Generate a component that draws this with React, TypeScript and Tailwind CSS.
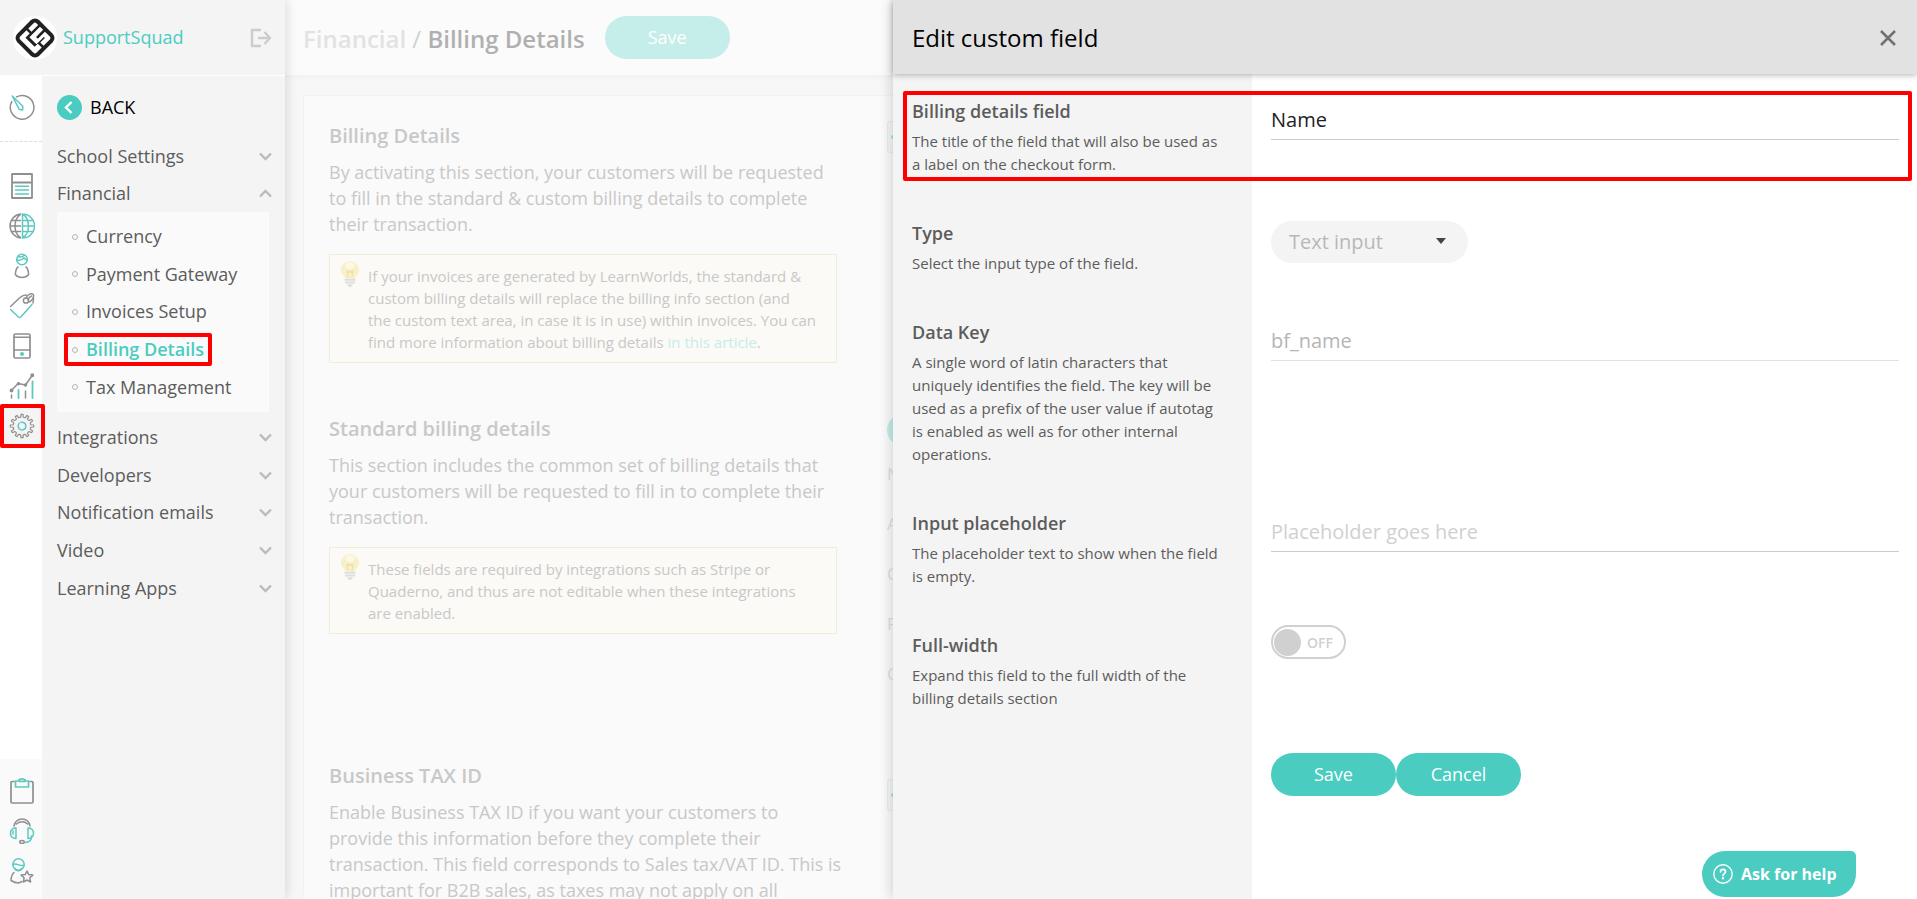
import React from "react";

const GREY = "#8f8f8f";
const TEAL = "#5cc9c0";

function Icon({ children }: { children: React.ReactNode }) {
  return (
    <svg
      className="h-[26px] w-[26px]"
      viewBox="0 0 26 26"
      fill="none"
      stroke={GREY}
      strokeWidth="1.5"
      strokeLinecap="round"
      strokeLinejoin="round"
      aria-hidden="true"
    >
      {children}
    </svg>
  );
}

const GaugeIcon = () => (
  <Icon>
    <path d="M7.6 2.9A11.8 11.8 0 1 1 2.8 7.6" />
    <path d="M3.3 2 13.8 12.2 13.6 16 10.2 15.4Z" stroke={TEAL} />
  </Icon>
);

const ListIcon = () => (
  <Icon>
    <path d="M3 1h20v24H3zM3 9.5h20" strokeWidth="1.8" />
    <path d="M6.5 13.2h13M6.5 17h13M6.5 21h13" stroke={TEAL} strokeWidth="1.6" />
  </Icon>
);

const GlobeIcon = () => (
  <Icon>
    <path d="M11.5 1.1a12 12 0 0 0 0 23.8M11.5 1.3C7.5 4 6 8.5 6 13s1.5 9 5.5 11.7M1 13h10.500M2.8 7.5h8.700M2.8 18.5h8.700" />
    <path d="M13.5 1a12 12 0 0 1 0 24zM13.5 1c4 2.5 6 7.5 6 12s-2 9.5-6 12M13.5 13h11.500M13.5 7.5h10M13.5 18.5h10" stroke={TEAL} />
  </Icon>
);

const PersonIcon = () => (
  <Icon>
    <circle cx="13" cy="6.5" r="5.3" stroke={TEAL} />
    <path d="M8 7c3 .8 5.5-.2 7-2.200.6 1.200 1.600 1.800 3 2M9.500 3.500c1.500.8 4 .5 5.500-1" stroke={TEAL} />
    <path d="M9 14c-1.600 1-2.400 4.500-2.700 7.500 3.500 4 9.900 4 13.400 0-.3-3-1.100-6.500-2.700-7.500" />
  </Icon>
);

const TagIcon = () => (
  <Icon>
    <path d="M1.500 13.500 11 4.500c1.500-1.300 4-2.500 6.500-2.500M24 10l.5-4.500" />
    <circle cx="17" cy="7.5" r="2.6" />
    <path d="M17 5c1.500-3.500 5-5 7-3.800 1.500 1.500 0 6-4 8M19 7c.5-2 2-3.500 3.500-4" />
    <path d="M1.500 16.500 9.500 24c.8.6 1.500.6 2.200 0L23 11.500" stroke={TEAL} />
  </Icon>
);

const PhoneIcon = () => (
  <Icon>
    <rect x="5" y="1" width="16" height="24" rx="1.5" strokeWidth="1.7" />
    <path d="M5 4.200h16M5 17h16" />
    <circle cx="13" cy="21" r="2" fill={TEAL} stroke="none" />
  </Icon>
);

const ChartIcon = () => (
  <Icon>
    <path d="M2.500 17.500 9 10.500l7.500 1.500L23.500 2" />
    <circle cx="2.5" cy="17.5" r="1.2" fill={GREY} />
    <circle cx="9.5" cy="10.8" r="1" fill={GREY} />
    <circle cx="16.5" cy="12" r="1" fill={GREY} />
    <circle cx="23.3" cy="2.2" r="1.2" fill={GREY} />
    <path d="M2.500 22v3M16.500 18v7" />
    <path d="M9.500 17v8M23.500 8.500V25" stroke={TEAL} strokeWidth="1.8" />
  </Icon>
);

const TEETH = Array.from({ length: 12 }, (_, i) => {
  const p = (deg: number, r: number) => {
    const a = ((i * 30 + deg) * Math.PI) / 180;
    return `${(13 + r * Math.sin(a)).toFixed(2)} ${(13 - r * Math.cos(a)).toFixed(2)}`;
  };
  return `${i ? "L" : "M"}${p(-8, 9)}L${p(-5, 11.7)}L${p(5, 11.7)}L${p(8, 9)}A2.6 2.6 0 0 0 ${p(22, 9)}`;
}).join("");

const GearIcon = () => (
  <Icon>
    <path d={`${TEETH}Z`} strokeWidth="1.2" />
    <path d="M12 9.300a3.900 3.900 0 1 0 2 0" stroke={TEAL} transform="rotate(-30 13 13)" />
  </Icon>
);

const ClipboardIcon = () => (
  <Icon>
    <path d="M5 3.500H3.200c-.7 0-1.200.5-1.200 1.200v19.100c0 .7.500 1.200 1.200 1.200h19.600c.7 0 1.200-.5 1.200-1.200V4.700c0-.7-.5-1.200-1.200-1.200H21" strokeWidth="1.7" />
    <path d="M6.500 3h3C10 1.300 11 .9 13 .9s3 .4 3.500 2.100h3v6h-13zM10 3.300h6" stroke={TEAL} strokeWidth="1.7" />
  </Icon>
);

const HeadsetIcon = () => (
  <Icon>
    <path d="M5 8c1-4.500 4-7 8-7s7 2.500 8 7M7.500 6c3-3 8-3 11 0" />
    <path d="M7 10v10.500c-3 .3-5.500-1.800-5.500-5.200S4 9.700 7 10zM4 13v3M19 10v10.500c3 .3 5.500-1.800 5.500-5.200S22 9.700 19 10zM22.300 18c.5 4-1.300 6-5.800 6.500" stroke={TEAL} />
    <ellipse cx="13" cy="24" rx="2.3" ry="1.5" />
  </Icon>
);

const PersonStarIcon = () => (
  <Icon>
    <circle cx="9.5" cy="6.5" r="5.7" stroke={TEAL} />
    <path d="M4 6.500c3-1.800 6 1.500 10.500 1M6 10.500c1 3 5.500 3 6.500 0" stroke={TEAL} />
    <path d="M5 14.500c-2 1.500-2.800 4.500-3 8C4.500 24 7 25 9.500 25l3.500-1.500" />
    <path d="m18 13 1.700 3.600 4.100.5-3 2.700.8 4.200-3.600-2-3.700 2 .8-4.200-3-2.700 4.100-.5z" />
  </Icon>
);

function Logo() {
  return (
    <svg className="h-[44px] w-[44px]" viewBox="0 0 44 44" aria-hidden="true">
      <circle cx="22" cy="22" r="22" fill="#fff" />
      <g transform="rotate(45 22 22)">
        <rect x="6.5" y="6.5" width="31" height="31" rx="6" fill="#212121" />
        <path d="M10.500 22.500h4.500v6h13V24h5.500v7.500a2 2 0 0 1-2 2h-19a2 2 0 0 1-2-2z" fill="#fff" />
        <path d="M10.500 20V12.500a2 2 0 0 1 2-2H15V20zM17.500 10.500H22v10h2.500v-10H31.500a2 2 0 0 1 2 2v9h-4.500V15h-1.500v10.500h-10z" fill="#fff" />
      </g>
    </svg>
  );
}

function Chevron({ up = false }: { up?: boolean }) {
  return (
    <svg className="h-[9px] w-[13px]" viewBox="0 0 13 9" fill="none" stroke="#bbbbbb" strokeWidth="2.4" aria-hidden="true">
      <path d={up ? "M1 7.500 6.500 2 12 7.500" : "M1 1.500 6.500 7 12 1.500"} />
    </svg>
  );
}

function MenuRow({ label, open = false }: { label: string; open?: boolean }) {
  return (
    <button type="button" className="flex flex-1 items-center justify-between text-left">
      <span>{label}</span>
      <Chevron up={open} />
    </button>
  );
}

function RailLink({ label, children }: { label: string; children: React.ReactNode }) {
  return (
    <a href="#" aria-label={label} className="flex h-10 items-center justify-center pl-0.5">
      {children}
    </a>
  );
}

function Bulb() {
  return (
    <svg className="h-[26px] w-[18px] shrink-0" viewBox="0 0 18 26" fill="none" aria-hidden="true">
      <path d="M9 0a9 9 0 0 1 9 9c0 4-3.500 5.500-4 8.500H4C3.500 14.500 0 13 0 9a9 9 0 0 1 9-9z" fill="#f8f0c6" />
      <ellipse cx="9" cy="4.5" rx="4.5" ry="3.5" fill="#fcf8e3" />
      <path d="M7 17l-1-6c3 1 3-1 1-1s-1 2 2 1c3 1 4-1 2-1s-1 2 1 1l-1 6" stroke="#ecdfae" />
      <path d="M3.500 18.700h11M4 21.500h10" stroke="#dedede" strokeWidth="2" />
      <path d="M6 23.300h6l-1.500 2.500h-3z" fill="#dedede" />
    </svg>
  );
}

function Notice({ children }: { children: React.ReactNode }) {
  return (
    <div className="mr-1.5 flex gap-[9px] border border-[#f1eed3] bg-[#fbfaf6] py-[6px] pl-[11px] pr-2">
      <Bulb />
      <p className="pb-[3px] pt-1 text-[15px] leading-[22px]">{children}</p>
    </div>
  );
}

function Section({ title, text, children }: { title: string; text: string; children?: React.ReactNode }) {
  return (
    <section className="w-[514px] text-[#c8c8c8]">
      <h2 className="text-[20px] font-semibold leading-[26px]">{title}</h2>
      <p className="mb-[17px] mt-[10px] text-[18px] leading-[26px]">{text}</p>
      {children}
    </section>
  );
}

function FieldInfo({ id, title, text }: { id: string; title: string; text: string }) {
  return (
    <div className="bg-[#f4f4f4] pb-[45px] pl-[19px] pr-7 text-[#5c5c5c]">
      <label htmlFor={id} className="block text-[18px] font-semibold leading-6">
        {title}
      </label>
      <p className="mt-[7px] text-[15px] leading-[23px]">{text}</p>
    </div>
  );
}

const SUB = ["Currency", "Payment Gateway", "Invoices Setup", "Billing Details", "Tax Management"];
const lineInput = "block h-[41px] w-full border-b bg-transparent text-[20px] outline-none";

export default function App() {
  return (
    <div className="relative flex h-screen overflow-hidden bg-[#f7f7f7] font-['Open_Sans',sans-serif]">
      <aside className="z-10 flex w-[285px] shrink-0 flex-col bg-[#f4f4f4] shadow-[2px_0_10px_rgba(0,0,0,0.12)]">
        <div className="flex h-[76px] items-center border-b border-white px-[13px]">
          <Logo />
          <a href="#" className="ml-1.5 flex-1 text-[18px] text-[#4accc1]">
            SupportSquad
          </a>
          <button type="button" aria-label="Log out">
            <svg className="h-5 w-[22px]" viewBox="0 0 22 20" fill="none" stroke="#cccccc" strokeWidth="2.4" aria-hidden="true">
              <path d="M11 2H2v16h9M8 10h11" />
              <path d="m14.500 4 5.500 6-5.500 6" />
            </svg>
          </button>
        </div>
        <div className="flex min-h-0 flex-1">
          <nav aria-label="Sections" className="flex w-[42px] flex-col justify-between bg-white">
            <div>
              <div className="border-b border-dashed border-[#dddddd] pb-[14px] pt-[11px]">
                <RailLink label="Dashboard"><GaugeIcon /></RailLink>
              </div>
              <div className="pt-6">
                <RailLink label="Courses"><ListIcon /></RailLink>
                <RailLink label="Website"><GlobeIcon /></RailLink>
                <RailLink label="Users"><PersonIcon /></RailLink>
                <RailLink label="Marketing"><TagIcon /></RailLink>
                <RailLink label="Mobile app"><PhoneIcon /></RailLink>
                <RailLink label="Reports"><ChartIcon /></RailLink>
                <div className="relative bg-[#f4f4f4]">
                  <RailLink label="Settings"><GearIcon /></RailLink>
                  <div className="pointer-events-none absolute -inset-y-0.5 -right-[3px] left-0 rounded-[2px] border-4 border-[#ff0000]" />
                </div>
              </div>
            </div>
            <div className="bg-[#fafafa] pb-2 pt-3">
              <RailLink label="Tasks"><ClipboardIcon /></RailLink>
              <RailLink label="Support"><HeadsetIcon /></RailLink>
              <RailLink label="Experts"><PersonStarIcon /></RailLink>
            </div>
          </nav>
          <nav aria-label="Settings" className="flex-1 pl-[15px] pr-[13px] pt-[19px] text-[18px] text-[#5c5c5c]">
            <button type="button" className="flex h-[25px] items-center gap-2 text-[18px] text-black">
              <svg className="h-[25px] w-[25px]" viewBox="0 0 25 25" fill="none" aria-hidden="true">
                <circle cx="12.5" cy="12.5" r="12.5" fill="#4accc1" />
                <path d="m14.500 7-5.500 5.500 5.500 5.500" stroke="#fff" strokeWidth="2.4" />
              </svg>
              BACK
            </button>
            <div className="mt-[18px] flex h-[74px] flex-col">
              <MenuRow label="School Settings" />
              <MenuRow label="Financial" open />
            </div>
            <ul className="mr-[3px] flex h-[200px] flex-col bg-[#fafafa] py-[6px] pl-[15px]">
              {SUB.map((s) => (
                <li key={s} className="flex flex-1 items-center">
                  <a
                    href="#"
                    className={
                      s === "Billing Details"
                        ? "relative flex items-center gap-2 font-semibold text-[#4accc1]"
                        : "flex items-center gap-2"
                    }
                  >
                    <span className="h-[6px] w-[6px] rounded-full border border-[#b5b5b5]" />
                    {s}
                    {s === "Billing Details" && (
                      <span className="pointer-events-none absolute -inset-x-2 -inset-y-[3px] rounded-[2px] border-4 border-[#ff0000]" />
                    )}
                  </a>
                </li>
              ))}
            </ul>
            <div className="mt-[7px] flex h-[188px] flex-col">
              <MenuRow label="Integrations" />
              <MenuRow label="Developers" />
              <MenuRow label="Notification emails" />
              <MenuRow label="Video" />
              <MenuRow label="Learning Apps" />
            </div>
          </nav>
        </div>
      </aside>

      <main className="flex min-w-0 flex-1 flex-col">
        <header className="flex h-[75px] shrink-0 items-center bg-[#fbfbfb] pl-[18px] shadow-[0_1px_8px_rgba(0,0,0,0.04)]">
          <h1 className="pt-0.5 text-[24px] font-semibold text-[#b0b0b0]">
            <span className="text-[#e2e2e2]">Financial</span> <span className="font-normal text-[#d0d0d0]">/</span> Billing Details
          </h1>
          <button type="button" className="ml-5 h-[43px] w-[125px] rounded-full bg-[#c5ede9] text-[18px] text-white">
            Save
          </button>
        </header>
        <div className="ml-[18px] mt-5 flex min-h-0 flex-1 overflow-hidden border-l border-t border-[#f2f2f2] bg-[#fafafa] pl-[25px]">
          <div className="w-[558px] shrink-0 pt-[27px]">
            <Section
              title="Billing Details"
              text="By activating this section, your customers will be requested to fill in the standard & custom billing details to complete their transaction."
            >
              <Notice>
                If your invoices are generated by LearnWorlds, the standard &amp; custom billing details will replace the billing info section (and
                the&nbsp;custom text area, in case it is in use) within invoices. You can find more information about billing details{" "}
                <a href="#" className="inline-block text-[#c5ede9]">in this article</a>.
              </Notice>
            </Section>
            <div className="mt-[53px] h-[294px]">
              <Section
                title="Standard billing details"
                text="This section includes the common set of billing details that your customers will be requested to fill in to complete their transaction."
              >
                <Notice>
                  These fields are required by integrations such as Stripe or Quaderno, and thus are not editable when these integrations
                  are&nbsp;enabled.
                </Notice>
              </Section>
            </div>
            <div className="mt-[53px]">
              <Section
                title="Business TAX ID"
                text="Enable Business TAX ID if you want your customers to provide this information before they complete their transaction. This field corresponds to Sales tax/VAT ID. This is important for B2B sales, as taxes may not apply on all"
              />
            </div>
          </div>
          <div className="flex flex-col pt-[25px] text-[17px] text-[#e0e0e0]">
            <span className="h-8 w-[60px] shrink-0 rounded-[3px] border border-[#ececec] bg-[#f6f6f6]">
              <span className="ml-[3px] mt-[13px] block h-1 w-1 rounded-full bg-[#a5e3dc]" />
            </span>
            <span className="mt-[261px] h-8 w-[75px] shrink-0 rounded-full bg-[#c5ede9]" />
            <ul className="mt-[3px] leading-[50px]">
              <li>N</li>
              <li>A</li>
              <li>C</li>
              <li>P</li>
              <li>C</li>
            </ul>
            <span className="mt-[80px] h-8 w-[60px] shrink-0 rounded-[3px] border border-[#ececec] bg-[#f6f6f6]">
              <span className="ml-[3px] mt-[13px] block h-1 w-1 rounded-full bg-[#a5e3dc]" />
            </span>
          </div>
        </div>
      </main>

      <form
        aria-label="Edit custom field"
        className="absolute inset-y-0 right-0 z-20 flex w-[1024px] flex-col bg-white shadow-[-2px_0_12px_rgba(0,0,0,0.16)]"
      >
        <header className="z-10 flex h-[74px] shrink-0 items-center justify-between bg-[#e2e2e2] pl-[19px] pr-5 pt-0.5 shadow-[0_1px_6px_rgba(0,0,0,0.3)]">
          <h2 className="text-[24px] font-medium text-black">Edit custom field</h2>
          <button type="button" aria-label="Close">
            <svg className="h-[18px] w-[18px]" viewBox="0 0 18 18" stroke="#707070" strokeWidth="2.5" aria-hidden="true">
              <path d="m2 2 14 14M16 2 2 16" />
            </svg>
          </button>
        </header>
        <div className="grid flex-1 grid-cols-[359px_1fr] grid-rows-[25px_auto_auto_auto_auto_auto_1fr]">
          <div className="bg-[#f4f4f4]" />
          <div />

          <div className="relative col-span-2 grid grid-cols-subgrid">
            <FieldInfo id="title" title="Billing details field" text="The title of the field that will also be used as a label on the checkout form." />
            <div className="pl-[19px] pr-[18px]">
              <input id="title" type="text" defaultValue="Name" className={`${lineInput} border-[#cccccc] text-[#222222]`} />
            </div>
            <div className="pointer-events-none absolute -top-2 bottom-10 left-[10px] right-[5px] rounded-[2px] border-4 border-[#ff0000]" />
          </div>

          <FieldInfo id="type" title="Type" text="Select the input type of the field." />
          <div className="pl-[19px]">
            <div className="relative w-[197px]">
              <select
                id="type"
                disabled
                className="h-[42px] w-full appearance-none rounded-full bg-[#f4f4f4] pl-[18px] text-[20px] text-[#b8b8b8] opacity-100"
              >
                <option>Text input</option>
              </select>
              <svg className="pointer-events-none absolute right-[22px] top-[17px] h-[6px] w-[10px]" viewBox="0 0 10 6" aria-hidden="true">
                <path d="M0 0h10L5 6z" fill="#444444" />
              </svg>
            </div>
          </div>

          <FieldInfo
            id="key"
            title="Data Key"
            text="A single word of latin characters that uniquely identifies the field. The key will be used as a prefix of the user value if autotag is enabled as well as for other internal operations."
          />
          <div className="pl-[19px] pr-[18px]">
            <input id="key" type="text" disabled defaultValue="bf_name" className={`${lineInput} border-[#e2e2e2] text-[#b5b5b5]`} />
          </div>

          <FieldInfo id="placeholder" title="Input placeholder" text="The placeholder text to show when the field is empty." />
          <div className="pl-[19px] pr-[18px]">
            <input
              id="placeholder"
              type="text"
              placeholder="Placeholder goes here"
              className={`${lineInput} border-[#cccccc] placeholder:text-[#d0d0d0]`}
            />
          </div>

          <FieldInfo id="full" title="Full-width" text="Expand this field to the full width of the billing details section" />
          <div className="pl-[19px]">
            <label className="-mt-2 flex h-[34px] w-[75px] items-center gap-1.5 rounded-full border-2 border-[#d0d0d0] pl-px text-[14px] font-semibold text-[#d0d0d0]">
              <input id="full" type="checkbox" className="h-[27px] w-[27px] appearance-none rounded-full bg-[#d0d0d0]" />
              OFF
            </label>
          </div>

          <div className="bg-[#f4f4f4]" />
          <div className="-mt-0.5 flex items-start pl-[19px] text-[18px] text-white">
            <button type="submit" className="h-[43px] w-[125px] rounded-full bg-[#4accc1]">Save</button>
            <button type="button" className="h-[43px] w-[125px] rounded-full bg-[#4accc1]">Cancel</button>
          </div>
        </div>
        <button
          type="button"
          className="absolute bottom-0.5 right-[61px] flex h-[46px] w-[154px] items-center gap-2 rounded-[23px] rounded-tr-[5px] bg-[#4accc1] pl-[11px] text-[16px] font-bold text-white"
        >
          <svg className="h-5 w-5" viewBox="0 0 20 20" fill="none" stroke="#fff" strokeWidth="1.4" strokeLinecap="round" aria-hidden="true">
            <circle cx="10" cy="10" r="9.2" />
            <path d="M7.500 7.800c0-3.200 5-3.200 5 0 0 1.800-2.500 1.800-2.500 3.700" strokeWidth="1.7" />
            <circle cx="10" cy="14.3" r=".5" fill="#fff" />
          </svg>
          Ask for help
        </button>
      </form>
    </div>
  );
}
